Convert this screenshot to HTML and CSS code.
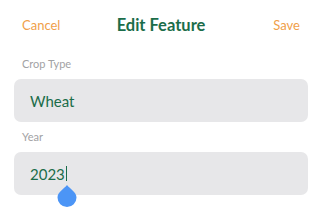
FILE: index.html
```html
<!DOCTYPE html>
<html lang="en">
<head>
    <meta charset="UTF-8">
    <meta name="viewport" content="width=device-width, initial-scale=1.0">
    <title>Edit Feature</title>
    <link rel="stylesheet" href="styles.css">
</head>
<body>
    <header class="nav-bar">
        <button class="nav-btn nav-left">Cancel</button>
        <h1 class="nav-title">Edit Feature</h1>
        <button class="nav-btn nav-right">Save</button>
    </header>

    <form class="form">
        <div class="field">
            <label class="field-label">Crop Type</label>
            <div class="field-input">Wheat</div>
        </div>
        <div class="field">
            <label class="field-label">Year</label>
            <div class="field-input">2023<span class="caret"><svg class="caret-handle" width="20" height="22" viewBox="0 0 20 22"><path d="M10 0 C13 4 19.5 7 19.5 12.5 A9.5 9.5 0 0 1 0.5 12.5 C0.5 7 7 4 10 0 Z"/></svg></span></div>
        </div>
    </form>
</body>
</html>
```

FILE: styles.css
```css
:root {
    --green: #1b6d4a;
    --orange: #f0a04a;
    --label-color: #a2a2a4;
    --field-bg: #e7e7e9;
    --handle-blue: #4c95f6;
}

html, body {
    height: 100%;
}

body {
    margin: 0;
    min-height: 100vh;
    background: #fff;
    font-family: Lato, "Noto Sans", sans-serif;
}

.nav-bar {
    height: 50px;
    display: grid;
    grid-template-columns: 1fr auto 1fr;
    align-items: center;
    padding: 0 18px 0 22px;
}

.nav-btn {
    background: none;
    border: none;
    padding: 0;
    font-family: inherit;
    font-size: 13px;
    color: var(--orange);
}

.nav-left {
    justify-self: start;
}

.nav-right {
    justify-self: end;
}

.nav-title {
    margin: 0;
    font-size: 16.5px;
    font-weight: 700;
    color: var(--green);
}

.form {
    padding: 7px 10px 0 14px;
    display: flex;
    flex-direction: column;
    gap: 8px;
}

.field {
    display: flex;
    flex-direction: column;
    gap: 8px;
}

.field-label {
    font-size: 11px;
    line-height: 14px;
    color: var(--label-color);
    padding-left: 8px;
}

.field-input {
    height: 43px;
    box-sizing: border-box;
    display: flex;
    align-items: center;
    padding-left: 16px;
    border-radius: 7px;
    background: var(--field-bg);
    font-size: 15px;
    color: var(--green);
}

.caret {
    position: relative;
    display: inline-block;
    width: 1.5px;
    height: 15px;
    margin-left: 1px;
    background: var(--green);
}

.caret-handle {
    position: absolute;
    top: 19px;
    left: -9px;
    overflow: visible;
    fill: var(--handle-blue);
}
```
